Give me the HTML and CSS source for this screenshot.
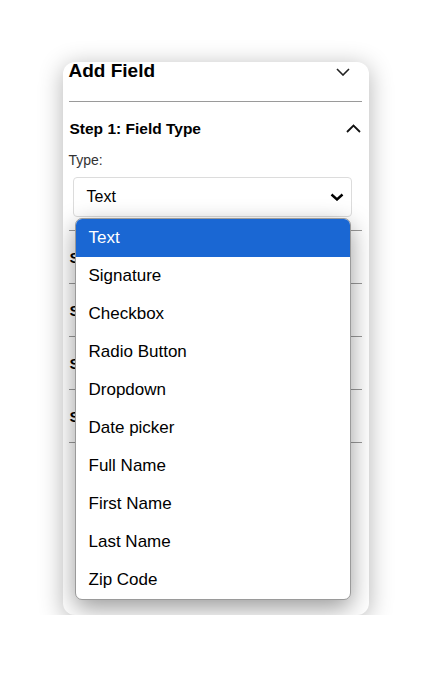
FILE: index.html
```html
<!DOCTYPE html>
<html lang="en">
<head>
<meta charset="utf-8">
<title>Add Field</title>
<link rel="stylesheet" href="styles.css">
</head>
<body>
<div class="card">
  <div class="card-header">
    <h2 class="card-title">Add Field</h2>
    <svg class="chev chev-main" width="14" height="8" viewBox="0 0 14 8"><path d="M1 1 L7 7 L13 1" fill="none" stroke="#222" stroke-width="1.6"/></svg>
  </div>

  <section class="step step-open">
    <div class="step-head">
      <h3 class="step-title">Step 1: Field Type</h3>
      <svg class="chev chev-step" width="15" height="9" viewBox="0 0 15 9"><path d="M1 8 L7.5 1.5 L14 8" fill="none" stroke="#111" stroke-width="1.8"/></svg>
    </div>
    <label class="field-label">Type:</label>
    <div class="select-wrap">
      <div class="select">
        <span>Text</span>
        <svg class="chev chev-select" width="14" height="8" viewBox="0 0 14 8"><path d="M1.5 1.5 L7 6.5 L12.5 1.5" fill="none" stroke="#000" stroke-width="2.4"/></svg>
      </div>
      <ul class="options">
        <li class="option selected">Text</li>
        <li class="option">Signature</li>
        <li class="option">Checkbox</li>
        <li class="option">Radio Button</li>
        <li class="option">Dropdown</li>
        <li class="option">Date picker</li>
        <li class="option">Full Name</li>
        <li class="option">First Name</li>
        <li class="option">Last Name</li>
        <li class="option">Zip Code</li>
      </ul>
    </div>
  </section>

  <section class="step"><div class="step-head"><h3 class="step-title">Step 2: Field Details</h3></div></section>
  <section class="step"><div class="step-head"><h3 class="step-title">Step 3: Validation</h3></div></section>
  <section class="step"><div class="step-head"><h3 class="step-title">Step 4: Appearance</h3></div></section>
  <section class="step"><div class="step-head"><h3 class="step-title">Step 5: Review</h3></div></section>
</div>
</body>
</html>
```

FILE: styles.css
```css
* { box-sizing: border-box; }

html, body {
  margin: 0;
  padding: 0;
  background: #fff;
  font-family: "Liberation Sans", Arial, sans-serif;
  color: #000;
}

.card {
  width: 306px;
  height: 553px;
  margin: 62px auto 0;
  padding: 0 7px 0 6px;
  background: #fff;
  border-radius: 12px;
  box-shadow: 0 4px 24px rgba(0, 0, 0, 0.3);
  overflow: hidden;
}

.card-header {
  display: flex;
  align-items: flex-start;
  justify-content: space-between;
  height: 42px;
  margin-top: -2px;
  border-bottom: 1px solid #9a9a9a;
}

.card-title {
  margin: 0;
  font-size: 19px;
  line-height: 21px;
  font-weight: bold;
}

.chev { display: block; flex: none; }
.chev-main { margin-right: 12px; margin-top: 8px; }
.chev-step { margin-right: 1px; }
.chev-select { margin-right: 7px; }

.step {
  border-bottom: 1px solid #9a9a9a;
}

.step-head {
  display: flex;
  align-items: center;
  justify-content: space-between;
  height: 52px;
  padding-left: 1px;
}

.step-title {
  margin: 0;
  font-size: 15.5px;
  line-height: 17px;
  font-weight: bold;
}

.step-open {
  padding-bottom: 13px;
}

.step-open .step-head {
  height: auto;
  padding-top: 18px;
}

.field-label {
  display: block;
  margin-top: 15px;
  font-size: 14px;
  line-height: 16px;
  color: #333;
}

.select-wrap {
  position: relative;
  margin: 9px 10px 0 4px;
}

.select {
  display: flex;
  align-items: center;
  justify-content: space-between;
  height: 40px;
  padding-left: 13px;
  border: 1px solid #dcdcdc;
  border-radius: 4px;
  background: #fff;
  font-size: 16px;
}

.options {
  position: absolute;
  z-index: 5;
  top: 41px;
  left: 2px;
  width: 276px;
  margin: 0;
  padding: 0;
  list-style: none;
  background: #fff;
  border: 1px solid #9a9a9a;
  border-radius: 7px;
  overflow: hidden;
  box-shadow: 0 8px 24px rgba(0, 0, 0, 0.4);
}

.option {
  height: 38px;
  line-height: 38px;
  padding-left: 13px;
  font-size: 17px;
  color: #000;
}

.option.selected {
  background: #1a67d3;
  color: #fff;
}
```
